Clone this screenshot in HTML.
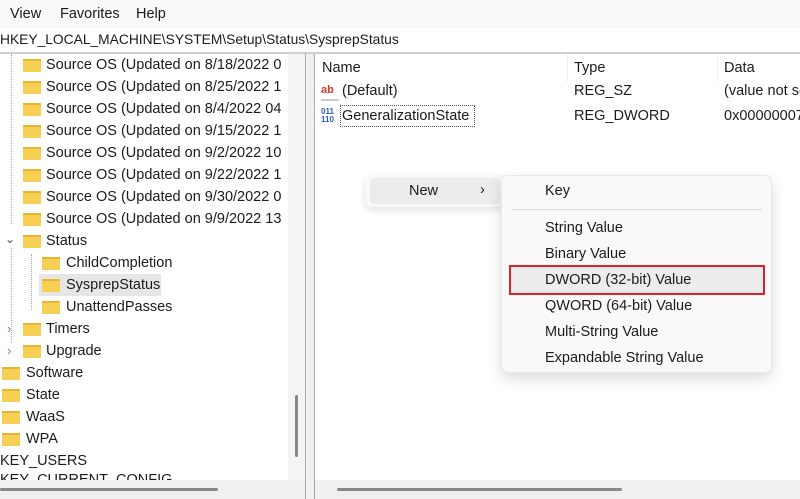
<!DOCTYPE html>
<html><head><style>
body{margin:0;width:800px;height:499px;overflow:hidden;background:#fff;font-family:"Liberation Sans",sans-serif;font-size:14.5px;line-height:20px;color:#1b1b1b;position:relative}
.a{position:absolute;white-space:nowrap}
.f{position:absolute;width:18px;height:13px;background:#f8cf55;border-top:2px solid #e8b530;box-sizing:border-box}
</style></head><body>
<div class="a" style="left:0;top:0;width:800px;height:28px;background:#f9f9f9"></div>
<div class="a" style="left:10px;top:4px">View</div>
<div class="a" style="left:60px;top:4px">Favorites</div>
<div class="a" style="left:136px;top:4px">Help</div>
<div class="a" style="left:0;top:28px;width:800px;height:24px;background:#fff;border-bottom:2px solid #cfcfcf"></div>
<div class="a" style="left:0;top:30px;font-size:13.8px">HKEY_LOCAL_MACHINE\SYSTEM\Setup\Status\SysprepStatus</div>
<div class="a" style="left:0;top:54px;width:288px;height:426px;background:#fff"></div>
<div class="a" style="left:288px;top:54px;width:17px;height:426px;background:#f4f4f4"></div>
<div class="a" style="left:295px;top:395px;width:3px;height:62px;background:#888;border-radius:2px"></div>
<div class="a" style="left:305px;top:54px;width:10px;height:445px;background:#f0f0f0;border-left:1px solid #aaa;border-right:1px solid #aaa;box-sizing:border-box"></div>
<div class="a" style="left:0;top:480px;width:305px;height:19px;background:#f0f0f0"></div>
<div class="a" style="left:0;top:488px;width:218px;height:3px;background:#888;border-radius:2px"></div>
<div class="a" style="left:315px;top:480px;width:485px;height:19px;background:#f0f0f0"></div>
<div class="a" style="left:337px;top:488px;width:285px;height:3px;background:#888;border-radius:2px"></div>

<div class="a" style="left:11px;top:54px;height:170px;border-left:1px dotted #aaa"></div>
<div class="a" style="left:11px;top:248px;height:95px;border-left:1px dotted #aaa"></div>
<div class="a" style="left:31px;top:254px;height:56px;border-left:1px dotted #aaa"></div>

<div class="f" style="left:23px;top:59px"></div><div class="a" style="left:46px;top:55px">Source OS (Updated on 8/18/2022 0</div>
<div class="f" style="left:23px;top:81px"></div><div class="a" style="left:46px;top:77px">Source OS (Updated on 8/25/2022 1</div>
<div class="f" style="left:23px;top:103px"></div><div class="a" style="left:46px;top:99px">Source OS (Updated on 8/4/2022 04</div>
<div class="f" style="left:23px;top:125px"></div><div class="a" style="left:46px;top:121px">Source OS (Updated on 9/15/2022 1</div>
<div class="f" style="left:23px;top:147px"></div><div class="a" style="left:46px;top:143px">Source OS (Updated on 9/2/2022 10</div>
<div class="f" style="left:23px;top:169px"></div><div class="a" style="left:46px;top:165px">Source OS (Updated on 9/22/2022 1</div>
<div class="f" style="left:23px;top:191px"></div><div class="a" style="left:46px;top:187px">Source OS (Updated on 9/30/2022 0</div>
<div class="f" style="left:23px;top:213px"></div><div class="a" style="left:46px;top:209px">Source OS (Updated on 9/9/2022 13</div>
<div class="a" style="left:5px;top:229px;font-size:12px;color:#555">⌄</div>
<div class="f" style="left:23px;top:235px"></div><div class="a" style="left:46px;top:231px">Status</div>
<div class="f" style="left:42px;top:257px"></div><div class="a" style="left:66px;top:253px">ChildCompletion</div>
<div class="a" style="left:39px;top:274px;width:122px;height:22px;background:#e6e6e6"></div>
<div class="f" style="left:42px;top:279px"></div><div class="a" style="left:66px;top:275px">SysprepStatus</div>
<div class="f" style="left:42px;top:301px"></div><div class="a" style="left:66px;top:297px">UnattendPasses</div>
<div class="a" style="left:7px;top:319px;color:#777;font-size:13px">›</div>
<div class="f" style="left:23px;top:323px"></div><div class="a" style="left:46px;top:319px">Timers</div>
<div class="a" style="left:7px;top:341px;color:#777;font-size:13px">›</div>
<div class="f" style="left:23px;top:345px"></div><div class="a" style="left:46px;top:341px">Upgrade</div>
<div class="f" style="left:2px;top:367px"></div><div class="a" style="left:26px;top:363px">Software</div>
<div class="f" style="left:2px;top:389px"></div><div class="a" style="left:26px;top:385px">State</div>
<div class="f" style="left:2px;top:411px"></div><div class="a" style="left:26px;top:407px">WaaS</div>
<div class="f" style="left:2px;top:433px"></div><div class="a" style="left:26px;top:429px">WPA</div>
<div class="a" style="left:0;top:451px">KEY_USERS</div>
<div class="a" style="left:0;top:474px;height:6px;overflow:hidden;line-height:1"><span style="position:relative;top:-1px">KEY_CURRENT_CONFIG</span></div>

<div class="a" style="left:322px;top:58px">Name</div>
<div class="a" style="left:567px;top:54px;height:28px;border-left:1px solid #eee"></div>
<div class="a" style="left:574px;top:58px">Type</div>
<div class="a" style="left:717px;top:54px;height:28px;border-left:1px solid #eee"></div>
<div class="a" style="left:724px;top:58px">Data</div>
<div class="a" style="left:321px;top:83px;width:18px;height:16px;font-size:11px;font-weight:bold;color:#d33;line-height:14px;border-bottom:2px solid #ccc">ab</div>
<div class="a" style="left:342px;top:81px">(Default)</div>
<div class="a" style="left:574px;top:81px">REG_SZ</div>
<div class="a" style="left:724px;top:81px">(value not se</div>
<div class="a" style="left:321px;top:108px;width:18px;height:16px;font-size:8px;font-weight:bold;color:#2a5cc4;line-height:8px">011<br>110</div>
<div class="a" style="left:340px;top:105px;width:135px;height:22px;border:1px dotted #555;box-sizing:border-box"></div>
<div class="a" style="left:342px;top:106px">GeneralizationState</div>
<div class="a" style="left:574px;top:106px">REG_DWORD</div>
<div class="a" style="left:724px;top:106px">0x00000007</div>

<div class="a" style="left:365px;top:175px;width:140px;height:32px;background:#f8f8f8;border-radius:6px;box-shadow:0 3px 8px rgba(0,0,0,.12)"></div>
<div class="a" style="left:370px;top:178px;width:130px;height:26px;background:#ececec;border-radius:4px"></div>
<div class="a" style="left:409px;top:181px">New</div>
<div class="a" style="left:480px;top:180px">›</div>
<div class="a" style="left:501px;top:175px;width:271px;height:198px;background:#f9f9f9;border:1px solid #e8e8e8;border-radius:7px;box-sizing:border-box;box-shadow:0 6px 14px rgba(0,0,0,.14)"></div>
<div class="a" style="left:545px;top:181px">Key</div>
<div class="a" style="left:512px;top:209px;width:250px;border-top:1px solid #ddd"></div>
<div class="a" style="left:545px;top:218px">String Value</div>
<div class="a" style="left:545px;top:244px">Binary Value</div>
<div class="a" style="left:509px;top:265px;width:256px;height:30px;background:#ececec;border:2px solid #e0202a;box-sizing:border-box"></div>
<div class="a" style="left:545px;top:270px">DWORD (32-bit) Value</div>
<div class="a" style="left:545px;top:296px">QWORD (64-bit) Value</div>
<div class="a" style="left:545px;top:322px">Multi-String Value</div>
<div class="a" style="left:545px;top:348px">Expandable String Value</div>
</body></html>
